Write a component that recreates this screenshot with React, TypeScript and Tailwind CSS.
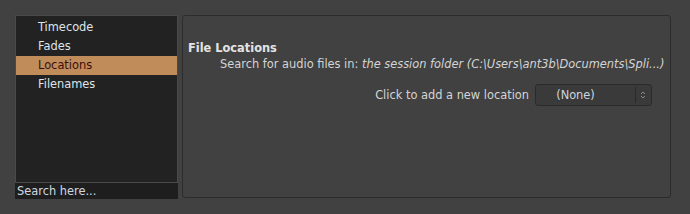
import React from 'react';

const items = ['Timecode', 'Fades', 'Locations', 'Filenames'];

const App: React.FC = () => {
  const selected = 'Locations';

  return (
    <div className="w-[690px] h-[214px] bg-[#414141] flex pl-[15px] pt-[15px] text-[11.4px] leading-[15px] font-['DejaVu_Sans',sans-serif] text-[#d4d4d4]">
      {/* sidebar */}
      <div className="w-[163px] flex flex-col">
        <div className="h-[168px] bg-[#222222] border border-[#4a4a4a] pt-[2px]">
          {items.map((item) => (
            <div
              key={item}
              className={
                item === selected
                  ? 'h-[19px] pl-[22px] flex items-center bg-[#c08d5a] text-[#3c0c0c]'
                  : 'h-[19px] pl-[22px] flex items-center text-[#dde4ea]'
              }
            >
              {item}
            </div>
          ))}
        </div>
        <div className="h-[16px] bg-[#1e1e1e] pl-[2px] flex items-center text-[#cfd8e0]">Search here...</div>
      </div>

      {/* content */}
      <div className="ml-[4px] w-[489px] h-[183px] border border-[#2c2c2c] rounded-[3px] pt-[25px] pl-[5px] pr-[18px]">
        <div className="font-bold text-[#e4e4e4]">File Locations</div>
        <div className="pl-[32px] mt-[1px] whitespace-nowrap">
          Search for audio files in: <span className="italic">the session folder (C:\Users\ant3b\Documents\Spli...)</span>
        </div>
        <div className="flex justify-end items-center gap-[6px] mt-[12px]">
          <span>Click to add a new location</span>
          <div className="w-[117px] h-[22px] bg-[#3a3a3a] border border-[#2a2a2a] rounded-[3px] flex items-center">
            <span className="flex-1 pr-[20px] text-center text-[#cdd6de]">(None)</span>
            <div className="w-[1px] h-[16px] bg-[#2a2a2a]" />
            <svg width="15" height="12" viewBox="0 0 15 12" className="text-[#8a8a8a]">
              <path d="M5 5 L7 3 L9 5 M5 7 L7 9 L9 7" fill="none" stroke="currentColor" strokeWidth="1" />
            </svg>
          </div>
        </div>
      </div>
    </div>
  );
};

export default App;
